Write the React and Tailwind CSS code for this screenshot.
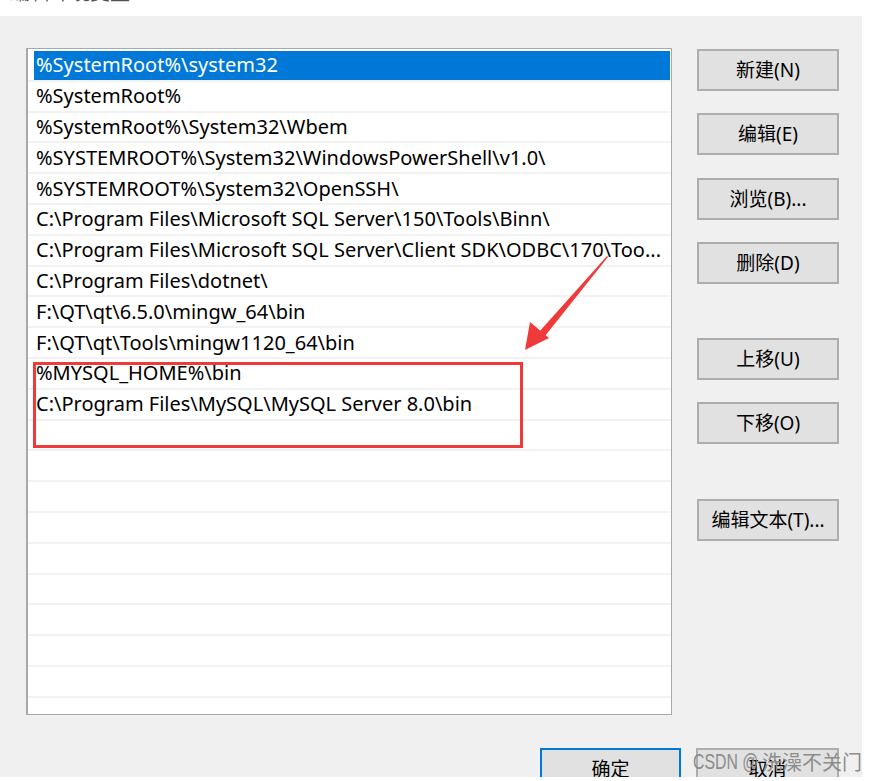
import React from "react";

const paths = [
  "%SystemRoot%\\system32",
  "%SystemRoot%",
  "%SystemRoot%\\System32\\Wbem",
  "%SYSTEMROOT%\\System32\\WindowsPowerShell\\v1.0\\",
  "%SYSTEMROOT%\\System32\\OpenSSH\\",
  "C:\\Program Files\\Microsoft SQL Server\\150\\Tools\\Binn\\",
  "C:\\Program Files\\Microsoft SQL Server\\Client SDK\\ODBC\\170\\Too...",
  "C:\\Program Files\\dotnet\\",
  "F:\\QT\\qt\\6.5.0\\mingw_64\\bin",
  "F:\\QT\\qt\\Tools\\mingw1120_64\\bin",
  "%MYSQL_HOME%\\bin",
  "C:\\Program Files\\MySQL\\MySQL Server 8.0\\bin",
];

const font = { fontFamily: '"Noto Sans", "Noto Sans CJK SC", sans-serif' };

const Button = ({ children, className = "" }) => (
  <div
    className={`w-[142px] h-[42px] flex items-center justify-center bg-[#e1e1e1] border-2 border-[#adadad] text-[19px] text-black ${className}`}
  >
    {children}
  </div>
);

const App = () => {
  const rows = [];
  for (let i = 0; i < 22; i++) {
    const text = paths[i];
    const selected = i === 0;
    rows.push(
      <div key={i} className="h-[30.8px] border-b-2 border-[#f2f2f2] flex">
        {selected ? (
          <div className="ml-[6px] mr-[1px] flex-1 bg-[#0078d7] text-white flex items-center pl-[2px] whitespace-nowrap text-[20px]">
            {text}
          </div>
        ) : (
          <div className="flex-1 flex items-center pl-[8px] whitespace-nowrap overflow-hidden text-[20px] text-black">
            {text}
          </div>
        )}
      </div>
    );
  }

  return (
    <div className="w-[877px] h-[781px] bg-white overflow-hidden" style={font}>
      <div className="h-[16px] overflow-hidden relative">
        <div className="absolute left-[10px] top-[-19px] text-[20px] text-[#555] leading-[24px]">编辑环境变量</div>
      </div>
      <div className="w-[862px] h-[761px] bg-[#f0f0f0] relative overflow-hidden">
        <div className="flex pl-[26px] pt-[32px]">
          <div className="w-[646px] h-[667px] bg-white border border-[#a9a9a9] border-l-2 pt-[2px] overflow-hidden">
            {rows}
          </div>
          <div className="ml-[25px] flex flex-col pt-[1px]">
            <Button>新建(N)</Button>
            <Button className="mt-[22px]">编辑(E)</Button>
            <Button className="mt-[23px]">浏览(B)...</Button>
            <Button className="mt-[22px]">删除(D)</Button>
            <Button className="mt-[54px]">上移(U)</Button>
            <Button className="mt-[22px]">下移(O)</Button>
            <Button className="mt-[55px]">编辑文本(T)...</Button>
          </div>
        </div>
        <div className="flex justify-end pr-[23px] mt-[33px] gap-[15px]">
          <div className="w-[141px] h-[42px] flex items-center justify-center bg-[#e1e1e1] border-2 border-[#0078d7] text-[19px] text-black">
            确定
          </div>
          <Button className="w-[143px]">取消</Button>
        </div>

        {/* red annotation */}
        <div className="absolute left-[33px] top-[346px] w-[490px] h-[86px] border-[3px] border-[#f03a3a]" />
        <svg className="absolute left-[515px] top-[236px]" width="100" height="104" viewBox="0 0 100 104">
          <path d="M92 4 L93 5 L30 84 L24 80 Z" fill="#f03a3a" />
          <path d="M10 98 L15 70 L34 86 Z" fill="#f03a3a" />
        </svg>

        {/* watermark */}
        <div className="absolute left-[693px] top-[732px] flex items-center text-[#8c8c8c] whitespace-nowrap leading-[28px]">
          <span
            className="inline-block w-[69px] overflow-visible text-[22px]"
            style={{ fontFamily: '"Liberation Sans Narrow", "Liberation Sans", sans-serif' }}
          >
            <span className="inline-block origin-left scale-x-[0.72]">CSDN @</span>
          </span>
          <span className="text-[20px]" style={{ fontFamily: '"Noto Sans CJK SC", sans-serif' }}>
            洗澡不关门
          </span>
        </div>
      </div>
    </div>
  );
};

export default App;
